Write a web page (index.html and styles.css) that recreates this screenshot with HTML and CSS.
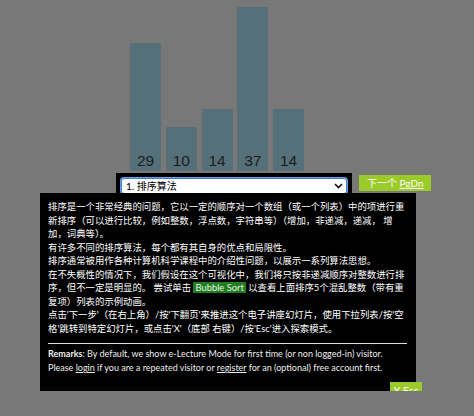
FILE: index.html
```html
<!DOCTYPE html>
<html lang="zh">

<head>
  <meta charset="UTF-8">
  <meta name="viewport" content="width=device-width, initial-scale=1.0">
  <title>排序 - e-Lecture</title>
  <link rel="stylesheet" href="styles.css">
</head>

<body>
  <div class="bars">
    <div class="bar" style="height: 128px"><span>29</span></div>
    <div class="bar" style="height: 44px"><span>10</span></div>
    <div class="bar" style="height: 62px"><span>14</span></div>
    <div class="bar" style="height: 164px"><span>37</span></div>
    <div class="bar" style="height: 62px"><span>14</span></div>
  </div>

  <div class="lecture">
    <div class="top-row">
      <div class="tab">
        <div class="select-wrap">
          <select class="slides">
            <option>1. 排序算法</option>
          </select>
          <svg class="chevron" width="9" height="6" viewBox="0 0 9 6">
            <path d="M1 1 L4.5 4.5 L8 1" fill="none" stroke="#111" stroke-width="1.6" />
          </svg>
        </div>
      </div>
      <a class="btn next" href="#">下一个 <u>PgDn</u></a>
    </div>

    <div class="panel">
      <div class="text">
        排序是一个非常经典的问题，它以一定的顺序对一个数组（或一个列表）中的项进行重<br>
        新排序（可以进行比较，例如整数，浮点数，字符串等）（增加，非递减，递减， 增<br>
        加，词典等）。<br>
        有许多不同的排序算法，每个都有其自身的优点和局限性。<br>
        排序通常被用作各种计算机科学课程中的介绍性问题，以展示一系列算法思想。<br>
        在不失概性的情况下，我们假设在这个可视化中，我们将只按非递减顺序对整数进行排<br>
        序，但不一定是明显的。 尝试单击 <span class="hl">Bubble Sort</span> 以查看上面排序5个混乱整数（带有重<br>
        复项）列表的示例动画。<br>
        点击'下一步'（在右上角）/按'下翻页'来推进这个电子讲座幻灯片，使用下拉列表/按'空<br>
        格'跳转到特定幻灯片，或点击'X'（底部 右键）/按'Esc'进入探索模式。
      </div>
      <hr>
      <div class="remarks">
        <b>Remarks</b>: By default, we show e-Lecture Mode for first time (or non logged-in) visitor.<br>
        Please <u>login</u> if you are a repeated visitor or <u>register</u> for an (optional) free account first.
      </div>
      <a class="btn esc" href="#">X <u>Esc</u></a>
    </div>
  </div>
</body>

</html>
```

FILE: styles.css
```css
* {
  margin: 0;
  padding: 0;
  box-sizing: border-box;
}

body {
  background-color: #787878;
  font-family: Lato, "Noto Sans CJK SC", sans-serif;
  font-size: 10px;
  color: #fff;
}

.bars {
  display: flex;
  align-items: flex-end;
  gap: 4.75px;
  height: 171px;
  padding-left: 130px;
}

.bar {
  width: 31px;
  background-color: #56707a;
  display: flex;
  align-items: flex-end;
  justify-content: center;
}

.bar span {
  font-family: "Liberation Sans", Arial, sans-serif;
  font-size: 15.5px;
  line-height: 16px;
  padding-bottom: 2px;
  color: #1b1b1b;
}

.top-row {
  display: flex;
  align-items: flex-start;
  height: 22px;
}

.tab {
  margin-left: 116px;
  margin-top: 2px;
  width: 236px;
  height: 20px;
  padding: 5px 5px 0;
  background-color: #000;
}

.select-wrap {
  position: relative;
  height: 16px;
}

.slides {
  appearance: none;
  width: 100%;
  height: 16px;
  padding: 0 4px;
  border: 1px solid #3d7fd6;
  border-radius: 3px;
  box-shadow: 0 0 0 1px #6a9ee0;
  background-color: #fff;
  font-family: Lato, "Noto Sans CJK SC", sans-serif;
  font-size: 10px;
  line-height: 14px;
  color: #000;
}

.chevron {
  position: absolute;
  right: 4px;
  top: 5px;
}

.btn {
  display: inline-block;
  background-color: #9acb2a;
  color: #fff;
  text-decoration: none;
  font-size: 10px;
  line-height: 16px;
  white-space: nowrap;
}

.btn u {
  text-decoration-thickness: 1px;
}

.next {
  margin-left: 7px;
  margin-top: 4px;
  height: 16px;
  padding: 0 7px 0 8px;
}

.panel {
  position: relative;
  margin-left: 40px;
  width: 376px;
  height: 198px;
  padding: 7px 0 0 8px;
  background-color: #000;
}

.text {
  font-size: 9.4px;
  line-height: 13.5px;
  white-space: nowrap;
}

.hl {
  background-color: #217d21;
  color: #e6f5e0;
  padding: 0 2px;
}

hr {
  margin: 8px 9px 3px 0;
  border: 0;
  border-top: 1px solid #ddd;
}

.remarks {
  font-size: 9px;
  line-height: 14px;
  color: #eee;
  white-space: nowrap;
}

.esc {
  position: absolute;
  right: -6px;
  bottom: -9px;
  width: 32px;
  height: 18px;
  line-height: 18px;
  text-align: center;
  font-size: 10.5px;
}
```
